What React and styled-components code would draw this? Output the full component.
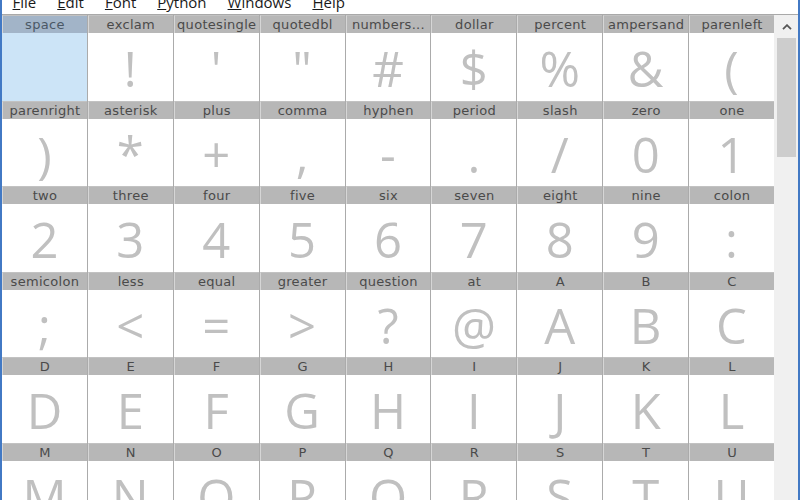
import React from "react";
import styled, { createGlobalStyle } from "styled-components";

const GlobalStyle = createGlobalStyle`
  html, body {
    margin: 0;
    padding: 0;
    overflow: hidden;
    background: #ffffff;
  }
`;

const menus = ["File", "Edit", "Font", "Python", "Windows", "Help"];

const glyphs = [
  ["space", " "], ["exclam", "!"], ["quotesingle", "'"], ["quotedbl", "\""],
  ["numbers...", "#"], ["dollar", "$"], ["percent", "%"], ["ampersand", "&"],
  ["parenleft", "("], ["parenright", ")"], ["asterisk", "*"], ["plus", "+"],
  ["comma", ","], ["hyphen", "-"], ["period", "."], ["slash", "/"],
  ["zero", "0"], ["one", "1"], ["two", "2"], ["three", "3"], ["four", "4"],
  ["five", "5"], ["six", "6"], ["seven", "7"], ["eight", "8"], ["nine", "9"],
  ["colon", ":"], ["semicolon", ";"], ["less", "<"], ["equal", "="],
  ["greater", ">"], ["question", "?"], ["at", "@"], ["A", "A"], ["B", "B"],
  ["C", "C"], ["D", "D"], ["E", "E"], ["F", "F"], ["G", "G"], ["H", "H"],
  ["I", "I"], ["J", "J"], ["K", "K"], ["L", "L"], ["M", "M"], ["N", "N"],
  ["O", "O"], ["P", "P"], ["Q", "Q"], ["R", "R"], ["S", "S"], ["T", "T"],
  ["U", "U"],
];

export default function App() {
  return (
    <>
      <GlobalStyle />
      <Window>
        <MenuBar>
          {menus.map((m) => (
            <MenuItem key={m}>
              <u>{m[0]}</u>
              {m.slice(1)}
            </MenuItem>
          ))}
        </MenuBar>
        <Main>
          <GlyphGrid>
            {glyphs.map(([name, ch], i) => (
              <Cell key={name}>
                <Label $selected={i === 0}>{name}</Label>
                <GlyphBox $selected={i === 0}>{ch}</GlyphBox>
              </Cell>
            ))}
          </GlyphGrid>
          <ScrollBar>
            <ArrowButton>
              <svg width="10" height="6" viewBox="0 0 10 6">
                <path
                  d="M1 5.2 L5 1.2 L9 5.2"
                  fill="none"
                  stroke="#555555"
                  strokeWidth="1.8"
                />
              </svg>
            </ArrowButton>
            <Thumb />
          </ScrollBar>
        </Main>
      </Window>
    </>
  );
}

const Window = styled.div`
  width: 800px;
  height: 500px;
  box-sizing: border-box;
  display: flex;
  flex-direction: column;
  border-left: 2px solid #4279c4;
  border-right: 2px solid #4279c4;
  background-color: #ffffff;
  overflow: hidden;
`;

const MenuBar = styled.div`
  height: 14px;
  flex: none;
  display: flex;
  flex-direction: row;
  align-items: flex-start;
  gap: 21px;
  padding-left: 10.5px;
  border-bottom: 1px solid #a9a9a9;
  background-color: #ffffff;
  overflow: hidden;
`;

const MenuItem = styled.div`
  margin-top: -5px;
  font-family: "Open Sans", "Noto Sans", sans-serif;
  font-size: 15px;
  line-height: 14px;
  color: #1a1a1a;
  white-space: nowrap;

  u {
    text-decoration-thickness: 1px;
    text-underline-offset: 1px;
  }
`;

const Main = styled.div`
  flex: 1;
  min-height: 0;
  display: flex;
  flex-direction: row;
`;

const GlyphGrid = styled.div`
  width: 772px;
  flex: none;
  display: grid;
  grid-template-columns: repeat(9, 1fr);
  grid-auto-rows: 85.5px;
  column-gap: 1px;
  background-color: #ababab;
  align-content: start;
`;

const Cell = styled.div`
  display: flex;
  flex-direction: column;
  min-width: 0;
`;

const Label = styled.div`
  height: 18px;
  flex: none;
  box-sizing: border-box;
  border-left: 1px solid #d6d6d6;
  border-top: 1px solid #c2c2c2;
  background-color: ${(p) => (p.$selected ? "#a2b4c8" : "#b7b7b7")};
  color: ${(p) => (p.$selected ? "#4b5866" : "#4a4a4a")};
  font-family: "DejaVu Sans", Verdana, sans-serif;
  font-size: 13px;
  letter-spacing: 0.3px;
  line-height: 17px;
  text-align: center;
  white-space: nowrap;
  overflow: hidden;
`;

const GlyphBox = styled.div`
  flex: 1;
  box-sizing: border-box;
  padding-top: 11px;
  background-color: ${(p) => (p.$selected ? "#cce4f7" : "#ffffff")};
  color: #c0c0c0;
  font-family: "Open Sans", "Noto Sans", sans-serif;
  font-size: 49px;
  line-height: 1;
  text-align: center;
  white-space: pre;
`;

const ScrollBar = styled.div`
  flex: 1;
  display: flex;
  flex-direction: column;
  background-color: #f0f0f0;
`;

const ArrowButton = styled.div`
  height: 23px;
  display: flex;
  align-items: center;
  justify-content: center;
  padding-left: 1px;
`;

const Thumb = styled.div`
  height: 119px;
  margin: 0 2px 0 3px;
  background-color: #cdcdcd;
`;
